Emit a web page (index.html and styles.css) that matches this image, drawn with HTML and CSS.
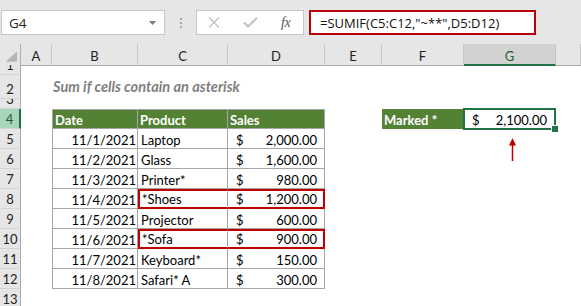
FILE: index.html
```html
<!DOCTYPE html>
<html lang="en">
<head>
<meta charset="utf-8">
<title>Sum if cells contain an asterisk</title>
<link rel="stylesheet" href="styles.css">
</head>
<body>
<div class="app">
  <div class="fbar">
    <div class="namebox"><span>G4</span><svg class="dd" width="7" height="4" viewBox="0 0 7 4"><polygon points="0,0 7,0 3.5,4" fill="#7a7a7a"/></svg></div>
    <div class="grip"><i></i><i></i><i></i></div>
    <div class="fxbtns">
      <svg class="ic-x" width="12" height="11" viewBox="0 0 12 11"><path d="M1 0.5 L11 10.5 M11 0.5 L1 10.5" stroke="#c3c3c3" stroke-width="1.4" fill="none"/></svg>
      <svg class="ic-ok" width="15" height="11" viewBox="0 0 15 11"><path d="M1 5.5 L5 9.5 L14 0.8" stroke="#c3c3c3" stroke-width="2" fill="none"/></svg>
      <span class="fx">fx</span>
    </div>
    <div class="formula">=SUMIF(C5:C12,"~**",D5:D12)</div>
  </div>

  <div class="sheet">
    <div class="row hdr">
      <div class="corner"><svg width="21" height="21" viewBox="0 0 21 21"><polygon points="18,7 18,18 6,18" fill="#b6b6b6"/></svg></div>
      <div class="ch">A</div><div class="ch">B</div><div class="ch">C</div><div class="ch">D</div><div class="ch">E</div><div class="ch">F</div><div class="ch sel">G</div><div class="ch"></div>
    </div>
    <div class="row r1">
      <div class="rh">1</div><div></div><div></div><div></div><div></div><div></div><div></div><div></div><div></div>
    </div>
    <div class="row r2">
      <div class="rh">2</div><div></div><div class="title">Sum if cells contain an asterisk</div><div></div><div></div><div></div><div></div><div></div><div></div>
    </div>
    <div class="row r3">
      <div class="rh">3</div><div></div><div></div><div></div><div></div><div></div><div></div><div></div><div></div>
    </div>
    <div class="row">
      <div class="rh rsel">4</div><div></div>
      <div class="t th first top">Date</div><div class="t th top">Product</div><div class="t th top">Sales</div>
      <div></div><div class="marked">Marked *</div>
      <div class="result"><span>$</span><span>2,100.00</span></div><div></div>
    </div>
    <div class="row">
      <div class="rh">5</div><div></div>
      <div class="t first date">11/1/2021</div><div class="t prod">Laptop</div><div class="t amt"><span>$</span><span>2,000.00</span></div>
      <div></div><div></div><div></div><div></div>
    </div>
    <div class="row">
      <div class="rh">6</div><div></div>
      <div class="t first date">11/2/2021</div><div class="t prod">Glass</div><div class="t amt"><span>$</span><span>1,600.00</span></div>
      <div></div><div></div><div></div><div></div>
    </div>
    <div class="row">
      <div class="rh">7</div><div></div>
      <div class="t first date">11/3/2021</div><div class="t prod">Printer*</div><div class="t amt"><span>$</span><span>980.00</span></div>
      <div></div><div></div><div></div><div></div>
    </div>
    <div class="row">
      <div class="rh">8</div><div></div>
      <div class="t first date">11/4/2021</div><div class="t prod hl-l">*Shoes</div><div class="t amt hl-r"><span>$</span><span>1,200.00</span></div>
      <div></div><div></div><div></div><div></div>
    </div>
    <div class="row">
      <div class="rh">9</div><div></div>
      <div class="t first date">11/5/2021</div><div class="t prod">Projector</div><div class="t amt"><span>$</span><span>600.00</span></div>
      <div></div><div></div><div></div><div></div>
    </div>
    <div class="row">
      <div class="rh">10</div><div></div>
      <div class="t first date">11/6/2021</div><div class="t prod hl-l">*Sofa</div><div class="t amt hl-r"><span>$</span><span>900.00</span></div>
      <div></div><div></div><div></div><div></div>
    </div>
    <div class="row">
      <div class="rh">11</div><div></div>
      <div class="t first date">11/7/2021</div><div class="t prod">Keyboard*</div><div class="t amt"><span>$</span><span>150.00</span></div>
      <div></div><div></div><div></div><div></div>
    </div>
    <div class="row">
      <div class="rh">12</div><div></div>
      <div class="t first date">11/8/2021</div><div class="t prod">Safari* A</div><div class="t amt"><span>$</span><span>300.00</span></div>
      <div></div><div></div><div></div><div></div>
    </div>
    <div class="row">
      <div class="rh">13</div><div></div><div></div><div></div><div></div><div></div><div></div><div></div><div></div>
    </div>

    <svg class="arrow" width="9" height="24" viewBox="0 0 9 24"><line x1="4.5" y1="6" x2="4.5" y2="23" stroke="#c00000" stroke-width="1.5"/><polygon points="4.5,0 1,7.5 8,7.5" fill="#c00000"/></svg>
  </div>
</div>
</body>
</html>
```

FILE: styles.css
```css
* {
  box-sizing: border-box;
  margin: 0;
  padding: 0;
}

body {
  margin: 0;
  width: 581px;
  height: 306px;
  overflow: hidden;
  background: #ffffff;
  font-family: Lato, "Liberation Sans", sans-serif;
  font-size: 13px;
  color: #000;
}

.app {
  width: 581px;
}

/* ---------- formula bar ---------- */
.fbar {
  height: 44px;
  background: #e6e6e6;
  display: flex;
  align-items: flex-start;
  padding: 10px 0 0 1px;
}

.namebox {
  width: 164px;
  height: 25px;
  background: #fff;
  border: 1px solid #c6c6c6;
  display: flex;
  align-items: center;
  justify-content: space-between;
  padding: 0 8px 0 7px;
  font-family: "Open Sans", sans-serif;
  font-size: 13.5px;
  color: #222;
}

.grip {
  width: 31px;
  height: 25px;
  display: flex;
  flex-direction: column;
  align-items: center;
  gap: 2px;
  padding-top: 8px;
}

.grip i {
  display: block;
  width: 2px;
  height: 2px;
  background: #a6a6a6;
}

.fxbtns {
  width: 108px;
  height: 25px;
  background: #fff;
  border: 1px solid #c6c6c6;
  margin-right: 5px;
  display: flex;
  align-items: center;
  padding-left: 11px;
}

.ic-x {
  margin-right: 23px;
}

.ic-ok {
  margin-right: 23px;
}

.fx {
  font-family: "Liberation Serif", serif;
  font-style: italic;
  font-size: 14px;
  color: #555;
  letter-spacing: -0.5px;
}

.formula {
  width: 227px;
  height: 25px;
  background: #fff;
  border: 2px solid #b8000a;
  display: flex;
  align-items: center;
  padding-left: 9px;
  font-family: "Open Sans", sans-serif;
  font-size: 13px;
  color: #111;
  white-space: nowrap;
}

/* ---------- sheet ---------- */
.sheet {
  position: relative;
}

.row {
  display: grid;
  grid-template-columns: 21px 31px 86px 90px 97px 57px 82px 92px 25px;
  height: 20px;
}

.row > div {
  display: flex;
  align-items: flex-end;
  line-height: 16px;
  white-space: nowrap;
  overflow: visible;
}

.hdr {
  height: 21px;
}

.r1 { height: 10px; }
.r2 { height: 24px; }
.r3 { height: 10px; }

.corner {
  background: #e6e6e6;
  border-right: 1px solid #ababab;
  border-bottom: 1px solid #ababab;
}

.corner svg {
  display: block;
}

.ch {
  background: #e6e6e6;
  border-right: 1px solid #c6c6c6;
  border-bottom: 1px solid #ababab;
  justify-content: center;
  padding-bottom: 1px;
  color: #222;
}

.ch.sel {
  background: #d2d2d2;
  border-bottom: 2px solid #217346;
  padding-bottom: 0;
  color: #1e5e3a;
}

.rh {
  background: #e6e6e6;
  border-right: 1px solid #ababab;
  border-bottom: 1px solid #d4d4d4;
  justify-content: center;
  padding-bottom: 1px;
  overflow: hidden !important;
  color: #222;
}

.rh.rsel {
  background: #a9d5ba;
  border-right: 2px solid #217346;
  color: #1c5e38;
}

.title {
  align-items: center !important;
  padding-left: 1px;
  font-weight: bold;
  font-style: italic;
  font-size: 14.6px;
  color: #7f7f7f;
}

/* table cells */
.t {
  border-right: 1px solid #a6a6a6;
  border-bottom: 1px solid #a6a6a6;
}

.t.first {
  border-left: 1px solid #a6a6a6;
}

.t.top {
  border-top: 1px solid #a6a6a6;
}

.th {
  background: #548235;
  color: #fff;
  font-weight: bold;
  padding-left: 2px;
}

.date {
  justify-content: flex-end;
  padding-right: 1px;
}

.prod {
  padding-left: 3px;
}

.amt {
  justify-content: space-between;
  padding: 0 7px 0 8px;
}

.hl-l {
  border-top: 2px solid #c00000;
  border-bottom: 2px solid #c00000;
  border-left: 2px solid #c00000;
  padding-left: 2px;
}

.hl-r {
  border-top: 2px solid #c00000;
  border-bottom: 2px solid #c00000;
  border-right: 2px solid #c00000;
  padding-right: 6px;
}

.marked {
  background: #548235;
  color: #fff;
  font-weight: bold;
  padding-left: 2px;
  padding-bottom: 1px;
}

.result {
  position: relative;
  justify-content: space-between;
  padding: 0 9px 1px 8px;
}

.result::after {
  content: "";
  position: absolute;
  top: -1px;
  left: -1px;
  right: 0;
  bottom: -1px;
  border: 2px solid #217346;
}

.result::before {
  content: "";
  position: absolute;
  right: -3px;
  bottom: -4px;
  width: 6px;
  height: 6px;
  background: #217346;
  border: 1px solid #fff;
  z-index: 2;
}

.arrow {
  position: absolute;
  left: 508px;
  top: 94px;
}
```
